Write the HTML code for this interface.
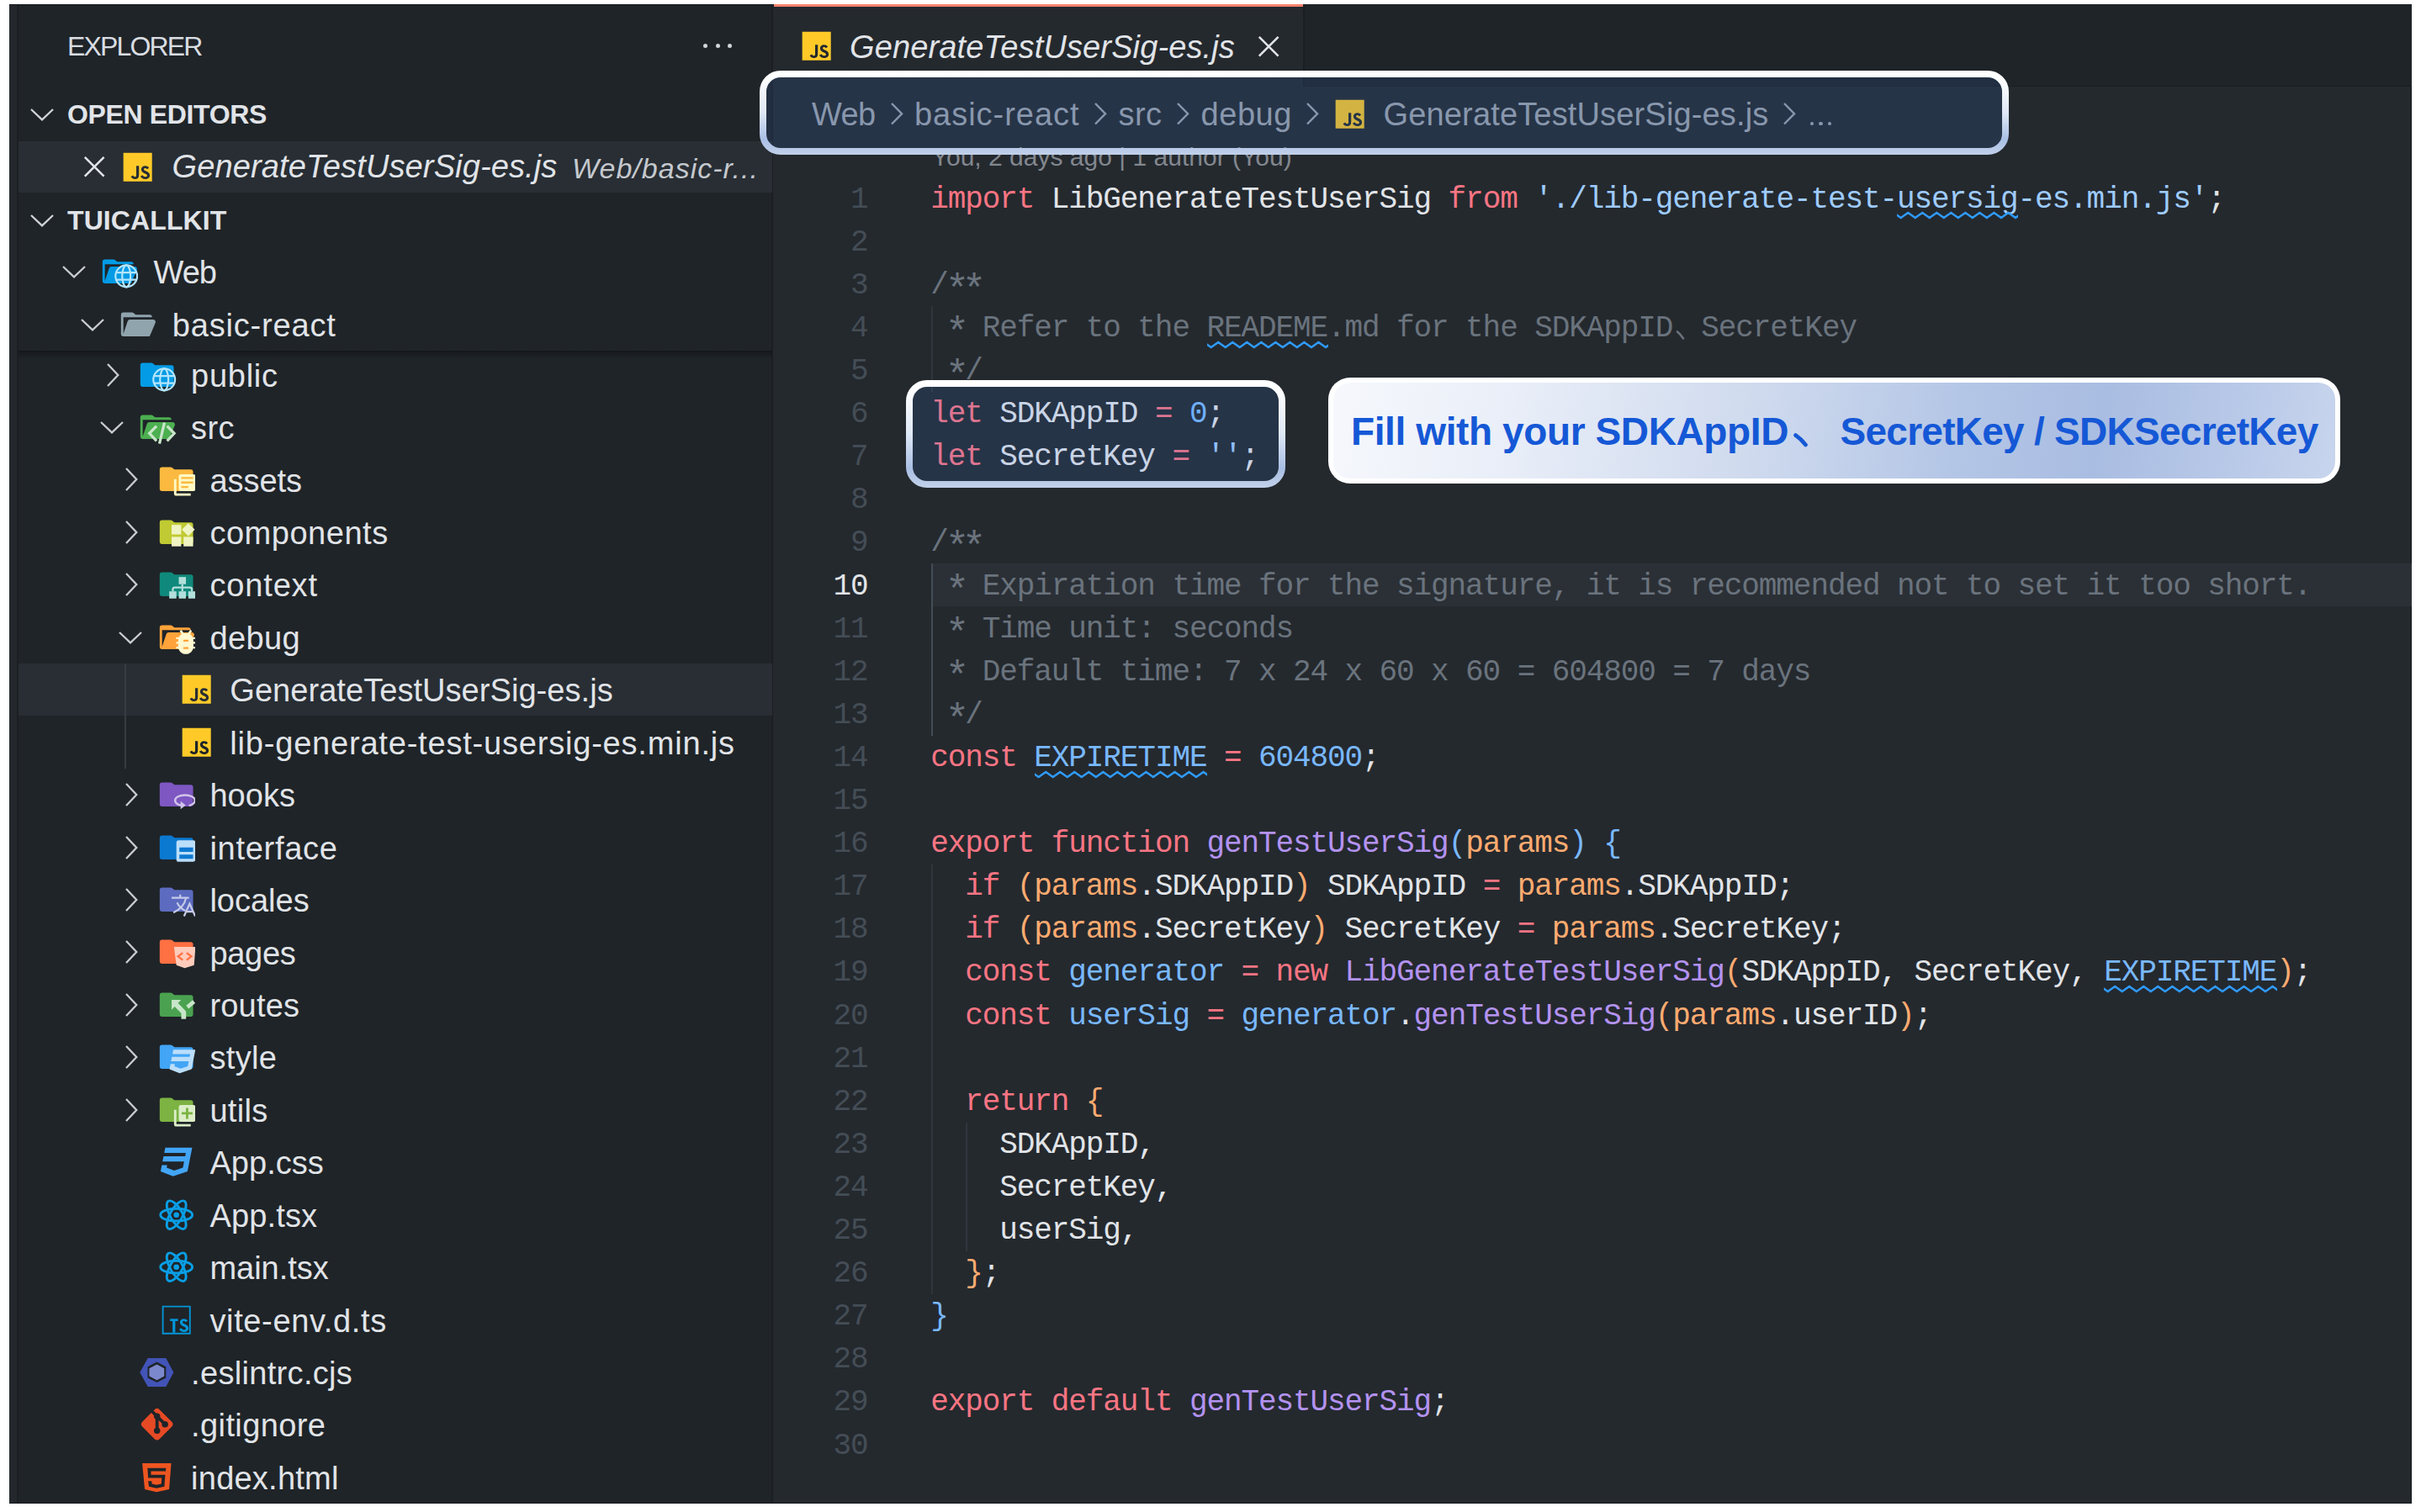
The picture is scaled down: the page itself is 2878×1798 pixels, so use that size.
<!DOCTYPE html>
<html><head><meta charset="utf-8"><title>GenerateTestUserSig-es.js</title>
<style>
html,body{margin:0;padding:0;background:#fff;}
body{width:2878px;height:1798px;position:relative;overflow:hidden;font-family:'Liberation Sans', sans-serif;}
.k{color:#f97583}.s{color:#9ecbff}.f{color:#b392f0}.c{color:#79b8ff}.p{color:#ffab70}.m{color:#6a737d}
.b1{color:#79b8ff}.b2{color:#ffab70}
.ln{position:absolute;left:940px;width:91.6px;text-align:right;letter-spacing:-1.09px;height:51.1px;line-height:51.1px;font-family:'Liberation Mono', monospace;font-size:36px;white-space:pre}
.cl{position:absolute;left:1106.2px;height:51.1px;line-height:51.1px;font-family:'Liberation Mono', monospace;font-size:36px;color:#e1e4e8;white-space:pre;letter-spacing:-1.09px}
.a{display:inline-block;transform:translateY(6.5px) scale(1.32)}
</style></head><body>
<div style="position:absolute;left:11px;top:5px;width:2856px;height:1783px;background:#24292e;"></div>
<div style="position:absolute;left:11px;top:5px;width:11px;height:1783px;background:#24282d;"></div>
<div style="position:absolute;left:20px;top:5px;width:2px;height:1783px;background:#1b1f23;"></div>
<div style="position:absolute;left:22px;top:5px;width:896px;height:1783px;background:#1f2428;"></div>
<div style="position:absolute;left:917.2px;top:5px;width:1.6px;height:1783px;background:#1b1f23;"></div>
<div style="position:absolute;left:11px;top:5px;width:2856px;height:1px;background:#15181c;"></div>
<div style="position:absolute;left:11px;top:1786.5px;width:2856px;height:1.5px;background:#15181c;"></div>
<div style="position:absolute;left:2865.5px;top:5px;width:1.5px;height:1783px;background:#15181c;"></div>
<div style="position:absolute;left:919.5px;top:5px;width:1947.5px;height:98px;background:#1f2428;"></div>
<div style="position:absolute;left:919.5px;top:5px;width:630px;height:98px;background:#24292e;"></div>
<div style="position:absolute;left:919.5px;top:5px;width:630px;height:3.2px;background:#f9826c;"></div>
<div style="position:absolute;left:1549px;top:5px;width:1.5px;height:98px;background:#1b1f23;"></div>
<div style="position:absolute;left:1550.5px;top:102px;width:1316.5px;height:1px;background:#1b1f23;"></div>
<svg style="position:absolute;left:947.50px;top:31.90px;" width="45.4" height="45.4" viewBox="0 0 24 24"><path d="M3 3h18v18H3V3m4.730 15.040c.4.850 1.190 1.550 2.540 1.550 1.500 0 2.530-.8 2.530-2.550v-5.780h-1.700V17c0 .860-.35 1.080-.9 1.080-.58 0-.82-.4-1.090-.870l-1.380.830m5.980-.18c.5.980 1.510 1.730 3.090 1.730 1.600 0 2.800-.830 2.800-2.360 0-1.410-.81-2.040-2.250-2.660l-.42-.18c-.73-.31-1.040-.52-1.040-1.020 0-.41.310-.73.810-.73.480 0 .8.210 1.090.73l1.310-.870c-.55-.96-1.330-1.330-2.400-1.330-1.510 0-2.480.960-2.480 2.230 0 1.380.810 2.030 2.030 2.550l.42.180c.78.340 1.240.55 1.240 1.130 0 .48-.45.830-1.150.830-.830 0-1.310-.43-1.670-1.030l-1.380.8z" fill="#ffca28"/></svg>
<div style="position:absolute;left:1010px;top:25px;height:62px;line-height:62px;font-family:'Liberation Sans', sans-serif;font-size:38px;color:#e1e4e8;white-space:pre;font-style:italic;letter-spacing:0.128px;">GenerateTestUserSig-es.js</div>
<svg style="position:absolute;left:1494.30px;top:40.50px" width="28.4" height="28.4" viewBox="0 0 28.4 28.4"><path d="M2.800 2.800L25.599999999999998 25.599999999999998M25.599999999999998 2.800L2.800 25.599999999999998" fill="none" stroke="#e1e4e8" stroke-width="2.6"/></svg>
<div style="position:absolute;left:80px;top:24px;height:62px;line-height:62px;font-family:'Liberation Sans', sans-serif;font-size:32px;color:#d9dde2;white-space:pre;letter-spacing:-1.848px;">EXPLORER</div>
<div style="position:absolute;left:836.0px;top:52px;width:5px;height:5px;border-radius:50%;background:#d1d5da"></div>
<div style="position:absolute;left:850.6px;top:52px;width:5px;height:5px;border-radius:50%;background:#d1d5da"></div>
<div style="position:absolute;left:865.2px;top:52px;width:5px;height:5px;border-radius:50%;background:#d1d5da"></div>
<svg style="position:absolute;left:34.00px;top:127.35px" width="32" height="18.3" viewBox="0 0 32 18.3"><path d="M3 3L16.0 15.3L29 3" fill="none" stroke="#d1d5da" stroke-width="2.3"/></svg>
<div style="position:absolute;left:80px;top:105px;height:62px;line-height:62px;font-family:'Liberation Sans', sans-serif;font-size:32px;color:#e1e4e8;white-space:pre;font-weight:bold;letter-spacing:-0.353px;">OPEN EDITORS</div>
<div style="position:absolute;left:22px;top:167.6px;width:896px;height:61.6px;background:#282e34;"></div>
<svg style="position:absolute;left:98.30px;top:184.30px" width="28.4" height="28.4" viewBox="0 0 28.4 28.4"><path d="M2.800 2.800L25.599999999999998 25.599999999999998M25.599999999999998 2.800L2.800 25.599999999999998" fill="none" stroke="#e1e4e8" stroke-width="2.6"/></svg>
<svg style="position:absolute;left:141.30px;top:175.80px;" width="45.4" height="45.4" viewBox="0 0 24 24"><path d="M3 3h18v18H3V3m4.730 15.040c.4.850 1.190 1.550 2.540 1.550 1.500 0 2.530-.8 2.530-2.550v-5.780h-1.700V17c0 .860-.35 1.080-.9 1.080-.58 0-.82-.4-1.090-.870l-1.380.830m5.980-.18c.5.980 1.510 1.730 3.090 1.730 1.600 0 2.800-.830 2.800-2.360 0-1.410-.81-2.040-2.250-2.660l-.42-.18c-.73-.31-1.040-.52-1.040-1.020 0-.41.310-.73.810-.73.480 0 .8.210 1.090.73l1.310-.870c-.55-.96-1.330-1.330-2.400-1.330-1.510 0-2.480.960-2.480 2.230 0 1.380.810 2.030 2.030 2.550l.42.180c.78.340 1.240.55 1.240 1.130 0 .48-.45.830-1.150.830-.830 0-1.310-.43-1.670-1.030l-1.380.8z" fill="#ffca28"/></svg>
<div style="position:absolute;left:204.5px;top:167px;height:62px;line-height:62px;font-family:'Liberation Sans', sans-serif;font-size:38px;color:#e1e4e8;white-space:pre;font-style:italic;letter-spacing:0.128px;">GenerateTestUserSig-es.js</div>
<div style="position:absolute;left:680px;top:169px;height:62px;line-height:62px;font-family:'Liberation Sans', sans-serif;font-size:34px;color:#c5c9ce;white-space:pre;font-style:italic;letter-spacing:1.011px;">Web/basic-r...</div>
<svg style="position:absolute;left:34.00px;top:253.35px" width="32" height="18.3" viewBox="0 0 32 18.3"><path d="M3 3L16.0 15.3L29 3" fill="none" stroke="#d1d5da" stroke-width="2.3"/></svg>
<div style="position:absolute;left:80px;top:231px;height:62px;line-height:62px;font-family:'Liberation Sans', sans-serif;font-size:32px;color:#e1e4e8;white-space:pre;font-weight:bold;letter-spacing:0.109px;">TUICALLKIT</div>
<div style="position:absolute;left:22px;top:788.7px;width:896px;height:62.04px;background:#282e34;"></div>
<div style="position:absolute;left:148.2px;top:788.7px;width:1.7px;height:124.88px;background:#363c43;"></div>
<svg style="position:absolute;left:119.00px;top:300.22px;" width="45.4" height="45.4" viewBox="0 0 24 24"><g transform="scale(.75)"><path d="M28.967 12H9.442a2 2 0 0 0-1.898 1.368L4 24V10h24a2 2 0 0 0-2-2H15.124a2 2 0 0 1-1.28-.464l-1.288-1.072A2 2 0 0 0 11.276 6H4a2 2 0 0 0-2 2v16a2 2 0 0 0 2 2h22l4.805-11.212A2 2 0 0 0 28.967 12z" fill="#039be5"/><g fill="none" stroke="#b3e5fc" stroke-width="1.55"><circle cx="22" cy="20" r="9.1"/><ellipse cx="22" cy="20" rx="3.500" ry="9.1"/><path d="M13.600 17h16.800M13.600 23h16.800"/></g></g></svg>
<svg style="position:absolute;left:71.50px;top:314.07px" width="32" height="18.3" viewBox="0 0 32 18.3"><path d="M3 3L16.0 15.3L29 3" fill="none" stroke="#c9cdd2" stroke-width="2.3"/></svg>
<div style="position:absolute;left:182.5px;top:293.31999999999994px;height:62px;line-height:62px;font-family:'Liberation Sans', sans-serif;font-size:38px;color:#e1e4e8;white-space:pre;letter-spacing:-0.984px;">Web</div>
<svg style="position:absolute;left:141.30px;top:362.66px;" width="45.4" height="45.4" viewBox="0 0 24 24"><g transform="scale(.75)"><path d="M28.967 12H9.442a2 2 0 0 0-1.898 1.368L4 24V10h24a2 2 0 0 0-2-2H15.124a2 2 0 0 1-1.28-.464l-1.288-1.072A2 2 0 0 0 11.276 6H4a2 2 0 0 0-2 2v16a2 2 0 0 0 2 2h22l4.805-11.212A2 2 0 0 0 28.967 12z" fill="#90a4ae"/></g></svg>
<svg style="position:absolute;left:93.80px;top:376.51px" width="32" height="18.3" viewBox="0 0 32 18.3"><path d="M3 3L16.0 15.3L29 3" fill="none" stroke="#c9cdd2" stroke-width="2.3"/></svg>
<div style="position:absolute;left:204.8px;top:355.76px;height:62px;line-height:62px;font-family:'Liberation Sans', sans-serif;font-size:38px;color:#e1e4e8;white-space:pre;letter-spacing:0.823px;">basic-react</div>
<svg style="position:absolute;left:164.40px;top:422.58px;" width="45.4" height="45.4" viewBox="0 0 24 24"><g transform="scale(.75)"><path d="M13.844 7.536l-1.288-1.072A2 2 0 0 0 11.276 6H4a2 2 0 0 0-2 2v16a2 2 0 0 0 2 2h24a2 2 0 0 0 2-2V10a2 2 0 0 0-2-2H15.124a2 2 0 0 1-1.28-.464z" fill="#039be5"/><g fill="none" stroke="#b3e5fc" stroke-width="1.55"><circle cx="22" cy="20" r="9.1"/><ellipse cx="22" cy="20" rx="3.500" ry="9.1"/><path d="M13.600 17h16.800M13.600 23h16.800"/></g></g></svg>
<svg style="position:absolute;left:124.95px;top:429.58px" width="18.3" height="32" viewBox="0 0 18.3 32"><path d="M3 3L15.3 16.0L3 29" fill="none" stroke="#c9cdd2" stroke-width="2.3"/></svg>
<div style="position:absolute;left:227.1px;top:415.68000000000006px;height:62px;line-height:62px;font-family:'Liberation Sans', sans-serif;font-size:38px;color:#e1e4e8;white-space:pre;letter-spacing:0.734px;">public</div>
<svg style="position:absolute;left:164.40px;top:485.02px;" width="45.4" height="45.4" viewBox="0 0 24 24"><g transform="scale(.75)"><path d="M28.967 12H9.442a2 2 0 0 0-1.898 1.368L4 24V10h24a2 2 0 0 0-2-2H15.124a2 2 0 0 1-1.28-.464l-1.288-1.072A2 2 0 0 0 11.276 6H4a2 2 0 0 0-2 2v16a2 2 0 0 0 2 2h22l4.805-11.212A2 2 0 0 0 28.967 12z" fill="#4caf50"/><g fill="none" stroke="#c8e6c9" stroke-width="2.3" stroke-linejoin="miter"><path d="M15.6 15.2L9.6 21.4l6 6.4M24.4 15.2l6 6.2-6 6.4M22.2 12.4L18 30"/></g></g></svg>
<svg style="position:absolute;left:116.90px;top:498.87px" width="32" height="18.3" viewBox="0 0 32 18.3"><path d="M3 3L16.0 15.3L29 3" fill="none" stroke="#c9cdd2" stroke-width="2.3"/></svg>
<div style="position:absolute;left:227.1px;top:478.12px;height:62px;line-height:62px;font-family:'Liberation Sans', sans-serif;font-size:38px;color:#e1e4e8;white-space:pre;letter-spacing:0.315px;">src</div>
<svg style="position:absolute;left:186.70px;top:547.46px;" width="45.4" height="45.4" viewBox="0 0 24 24"><g transform="scale(.75)"><path d="M13.844 7.536l-1.288-1.072A2 2 0 0 0 11.276 6H4a2 2 0 0 0-2 2v16a2 2 0 0 0 2 2h24a2 2 0 0 0 2-2V10a2 2 0 0 0-2-2H15.124a2 2 0 0 1-1.28-.464z" fill="#fbb940"/><path d="M14 16h2v12h12v2H16a2 2 0 0 1-2-2z" fill="#fff9c4"/><rect x="18" y="12" width="14" height="14" rx="1.8" fill="#fff9c4"/><path d="M20 14.2h10v1.7H20zM20 18h10v1.7H20zM20 21.8h6v1.7h-6z" fill="#fbb940"/></g></svg>
<svg style="position:absolute;left:147.25px;top:554.46px" width="18.3" height="32" viewBox="0 0 18.3 32"><path d="M3 3L15.3 16.0L3 29" fill="none" stroke="#c9cdd2" stroke-width="2.3"/></svg>
<div style="position:absolute;left:249.4px;top:540.5600000000001px;height:62px;line-height:62px;font-family:'Liberation Sans', sans-serif;font-size:38px;color:#e1e4e8;white-space:pre;letter-spacing:-0.038px;">assets</div>
<svg style="position:absolute;left:186.70px;top:609.90px;" width="45.4" height="45.4" viewBox="0 0 24 24"><g transform="scale(.75)"><path d="M13.844 7.536l-1.288-1.072A2 2 0 0 0 11.276 6H4a2 2 0 0 0-2 2v16a2 2 0 0 0 2 2h24a2 2 0 0 0 2-2V10a2 2 0 0 0-2-2H15.124a2 2 0 0 1-1.28-.464z" fill="#c0ca33"/><g fill="#f0f4c3"><rect x="12" y="10" width="8" height="8"/><rect x="12" y="20" width="8" height="8"/><rect x="22" y="20" width="8" height="8"/><path d="M26 8.6l5.4 5.4-5.4 5.4-5.4-5.4z"/></g></g></svg>
<svg style="position:absolute;left:147.25px;top:616.90px" width="18.3" height="32" viewBox="0 0 18.3 32"><path d="M3 3L15.3 16.0L3 29" fill="none" stroke="#c9cdd2" stroke-width="2.3"/></svg>
<div style="position:absolute;left:249.4px;top:603.0000000000001px;height:62px;line-height:62px;font-family:'Liberation Sans', sans-serif;font-size:38px;color:#e1e4e8;white-space:pre;letter-spacing:0.528px;">components</div>
<svg style="position:absolute;left:186.70px;top:672.34px;" width="45.4" height="45.4" viewBox="0 0 24 24"><g transform="scale(.75)"><path d="M13.844 7.536l-1.288-1.072A2 2 0 0 0 11.276 6H4a2 2 0 0 0-2 2v16a2 2 0 0 0 2 2h24a2 2 0 0 0 2-2V10a2 2 0 0 0-2-2H15.124a2 2 0 0 1-1.28-.464z" fill="#0f897b"/><g fill="#b2dfdb"><rect x="18" y="10" width="6" height="6"/><rect x="10" y="22" width="6" height="6"/><rect x="18" y="22" width="6" height="6"/><rect x="26" y="22" width="6" height="6"/></g><path d="M21 16v6M13 22v-1.6a1.6 1.6 0 0 1 1.6-1.6h12.8a1.6 1.6 0 0 1 1.6 1.6V22" fill="none" stroke="#b2dfdb" stroke-width="1.6"/></g></svg>
<svg style="position:absolute;left:147.25px;top:679.34px" width="18.3" height="32" viewBox="0 0 18.3 32"><path d="M3 3L15.3 16.0L3 29" fill="none" stroke="#c9cdd2" stroke-width="2.3"/></svg>
<div style="position:absolute;left:249.4px;top:665.44px;height:62px;line-height:62px;font-family:'Liberation Sans', sans-serif;font-size:38px;color:#e1e4e8;white-space:pre;letter-spacing:0.853px;">context</div>
<svg style="position:absolute;left:186.70px;top:734.78px;" width="45.4" height="45.4" viewBox="0 0 24 24"><g transform="scale(.75)"><path d="M28.967 12H9.442a2 2 0 0 0-1.898 1.368L4 24V10h24a2 2 0 0 0-2-2H15.124a2 2 0 0 1-1.28-.464l-1.288-1.072A2 2 0 0 0 11.276 6H4a2 2 0 0 0-2 2v16a2 2 0 0 0 2 2h22l4.805-11.212A2 2 0 0 0 28.967 12z" fill="#ffa33a"/><g fill="#fff8d0"><path d="M23.900 12.600c3.600 0 6.400 2.700 6.400 6.500v4.500c0 3.800-2.800 6.600-6.400 6.600s-6.400-2.800-6.400-6.600V19.100c0-3.800 2.800-6.500 6.400-6.500z"/><path d="M18.700 10.800l1.600-1 2.200 3.400-1.600 1zM29.100 10.800l-1.600-1-2.200 3.400 1.600 1z"/><path d="M15.800 16h3v1.600h-3zM15.800 19.900h3v1.600h-3zM15.800 24h3v1.600h-3zM29 16h3v1.600h-3zM29 19.900h3v1.600h-3zM29 24h3v1.600h-3z"/></g><path d="M21.800 18.200h4.300v1.600h-4.300zM21.800 24.300h4.300v1.600h-4.300z" fill="#ffa33a"/></g></svg>
<svg style="position:absolute;left:139.20px;top:748.63px" width="32" height="18.3" viewBox="0 0 32 18.3"><path d="M3 3L16.0 15.3L29 3" fill="none" stroke="#c9cdd2" stroke-width="2.3"/></svg>
<div style="position:absolute;left:249.4px;top:727.88px;height:62px;line-height:62px;font-family:'Liberation Sans', sans-serif;font-size:38px;color:#e1e4e8;white-space:pre;letter-spacing:0.386px;">debug</div>
<svg style="position:absolute;left:210.60px;top:797.22px;" width="45.4" height="45.4" viewBox="0 0 24 24"><path d="M3 3h18v18H3V3m4.730 15.040c.4.850 1.190 1.550 2.540 1.550 1.500 0 2.530-.8 2.530-2.550v-5.780h-1.700V17c0 .860-.35 1.080-.9 1.080-.58 0-.82-.4-1.090-.870l-1.380.830m5.980-.18c.5.980 1.510 1.730 3.090 1.730 1.600 0 2.800-.830 2.800-2.360 0-1.410-.81-2.040-2.250-2.660l-.42-.18c-.73-.31-1.040-.52-1.040-1.020 0-.41.310-.73.810-.73.480 0 .8.210 1.090.73l1.310-.870c-.55-.96-1.330-1.330-2.400-1.330-1.510 0-2.480.960-2.480 2.230 0 1.380.810 2.030 2.030 2.550l.42.180c.78.340 1.240.55 1.240 1.130 0 .48-.45.830-1.150.830-.830 0-1.310-.43-1.670-1.030l-1.380.8z" fill="#ffca28"/></svg>
<div style="position:absolute;left:273.3px;top:790.32px;height:62px;line-height:62px;font-family:'Liberation Sans', sans-serif;font-size:38px;color:#e1e4e8;white-space:pre;letter-spacing:0.053px;">GenerateTestUserSig-es.js</div>
<svg style="position:absolute;left:210.60px;top:859.66px;" width="45.4" height="45.4" viewBox="0 0 24 24"><path d="M3 3h18v18H3V3m4.730 15.040c.4.850 1.190 1.550 2.540 1.550 1.500 0 2.530-.8 2.530-2.550v-5.780h-1.700V17c0 .860-.35 1.080-.9 1.080-.58 0-.82-.4-1.090-.870l-1.380.830m5.980-.18c.5.980 1.510 1.730 3.090 1.730 1.600 0 2.800-.830 2.800-2.360 0-1.410-.81-2.040-2.250-2.660l-.42-.18c-.73-.31-1.040-.52-1.040-1.020 0-.41.310-.73.810-.73.480 0 .8.210 1.090.73l1.310-.870c-.55-.96-1.330-1.330-2.400-1.330-1.510 0-2.480.960-2.480 2.230 0 1.380.810 2.030 2.030 2.550l.42.180c.78.340 1.240.55 1.240 1.130 0 .48-.45.830-1.150.830-.830 0-1.310-.43-1.670-1.030l-1.380.8z" fill="#ffca28"/></svg>
<div style="position:absolute;left:273.3px;top:852.7600000000001px;height:62px;line-height:62px;font-family:'Liberation Sans', sans-serif;font-size:38px;color:#e1e4e8;white-space:pre;letter-spacing:0.805px;">lib-generate-test-usersig-es.min.js</div>
<svg style="position:absolute;left:186.70px;top:922.10px;" width="45.4" height="45.4" viewBox="0 0 24 24"><g transform="scale(.75)"><path d="M13.844 7.536l-1.288-1.072A2 2 0 0 0 11.276 6H4a2 2 0 0 0-2 2v16a2 2 0 0 0 2 2h24a2 2 0 0 0 2-2V10a2 2 0 0 0-2-2H15.124a2 2 0 0 1-1.28-.464z" fill="#7e57c2"/><path d="M26.500 25.300c3.100-.6 5-2.200 5-4.300 0-2.700-3.700-4.400-8.300-4.400s-8.300 1.700-8.300 4.400c0 2 2 3.500 4.900 4.200" fill="none" stroke="#d1c4e9" stroke-width="1.7"/><path d="M19.500 21.600l4.300 3.400-4.300 3.400z" fill="#d1c4e9"/></g></svg>
<svg style="position:absolute;left:147.25px;top:929.10px" width="18.3" height="32" viewBox="0 0 18.3 32"><path d="M3 3L15.3 16.0L3 29" fill="none" stroke="#c9cdd2" stroke-width="2.3"/></svg>
<div style="position:absolute;left:249.4px;top:915.2px;height:62px;line-height:62px;font-family:'Liberation Sans', sans-serif;font-size:38px;color:#e1e4e8;white-space:pre;letter-spacing:0.059px;">hooks</div>
<svg style="position:absolute;left:186.70px;top:984.54px;" width="45.4" height="45.4" viewBox="0 0 24 24"><g transform="scale(.75)"><path d="M13.844 7.536l-1.288-1.072A2 2 0 0 0 11.276 6H4a2 2 0 0 0-2 2v16a2 2 0 0 0 2 2h24a2 2 0 0 0 2-2V10a2 2 0 0 0-2-2H15.124a2 2 0 0 1-1.28-.464z" fill="#0c79d0"/><rect x="16" y="10" width="16" height="18" rx="2" fill="#bbdefb"/><path d="M18.500 16h11.500v3.700H18.500zM18.500 22h11.500v3.600H18.500z" fill="#0c79d0"/></g></svg>
<svg style="position:absolute;left:147.25px;top:991.54px" width="18.3" height="32" viewBox="0 0 18.3 32"><path d="M3 3L15.3 16.0L3 29" fill="none" stroke="#c9cdd2" stroke-width="2.3"/></svg>
<div style="position:absolute;left:249.4px;top:977.64px;height:62px;line-height:62px;font-family:'Liberation Sans', sans-serif;font-size:38px;color:#e1e4e8;white-space:pre;letter-spacing:0.728px;">interface</div>
<svg style="position:absolute;left:186.70px;top:1046.98px;" width="45.4" height="45.4" viewBox="0 0 24 24"><g transform="scale(.75)"><path d="M13.844 7.536l-1.288-1.072A2 2 0 0 0 11.276 6H4a2 2 0 0 0-2 2v16a2 2 0 0 0 2 2h24a2 2 0 0 0 2-2V10a2 2 0 0 0-2-2H15.124a2 2 0 0 1-1.28-.464z" fill="#5c6bc0"/><g fill="none" stroke="#c5cae9" stroke-width="1.5"><path d="M12 14.500h14.500M19.200 11.800v2.700M24 14.800c-1 5-5 9.500-10.500 12.200M16.500 18.500c1.500 3 4 5.500 7 7"/><path d="M22.400 30l4.700-10.500L31.800 30M24.200 26.200h5.800" stroke-width="1.6"/></g></g></svg>
<svg style="position:absolute;left:147.25px;top:1053.98px" width="18.3" height="32" viewBox="0 0 18.3 32"><path d="M3 3L15.3 16.0L3 29" fill="none" stroke="#c9cdd2" stroke-width="2.3"/></svg>
<div style="position:absolute;left:249.4px;top:1040.0800000000002px;height:62px;line-height:62px;font-family:'Liberation Sans', sans-serif;font-size:38px;color:#e1e4e8;white-space:pre;letter-spacing:0.000px;">locales</div>
<svg style="position:absolute;left:186.70px;top:1109.42px;" width="45.4" height="45.4" viewBox="0 0 24 24"><g transform="scale(.75)"><path d="M13.844 7.536l-1.288-1.072A2 2 0 0 0 11.276 6H4a2 2 0 0 0-2 2v16a2 2 0 0 0 2 2h24a2 2 0 0 0 2-2V10a2 2 0 0 0-2-2H15.124a2 2 0 0 1-1.28-.464z" fill="#ff7043"/><path d="M14 12h18l-1.200 15.400L23 29.700l-7-2.300z" fill="#ffccbc"/><path d="M21.300 17L17.400 20l3.900 3M24.600 17l3.900 3-3.900 3" fill="none" stroke="#ff7043" stroke-width="1.650"/></g></svg>
<svg style="position:absolute;left:147.25px;top:1116.42px" width="18.3" height="32" viewBox="0 0 18.3 32"><path d="M3 3L15.3 16.0L3 29" fill="none" stroke="#c9cdd2" stroke-width="2.3"/></svg>
<div style="position:absolute;left:249.4px;top:1102.5200000000002px;height:62px;line-height:62px;font-family:'Liberation Sans', sans-serif;font-size:38px;color:#e1e4e8;white-space:pre;letter-spacing:-0.269px;">pages</div>
<svg style="position:absolute;left:186.70px;top:1171.86px;" width="45.4" height="45.4" viewBox="0 0 24 24"><g transform="scale(.75)"><path d="M13.844 7.536l-1.288-1.072A2 2 0 0 0 11.276 6H4a2 2 0 0 0-2 2v16a2 2 0 0 0 2 2h24a2 2 0 0 0 2-2V10a2 2 0 0 0-2-2H15.124a2 2 0 0 1-1.28-.464z" fill="#4aa250"/><g fill="#c8e6c9"><path d="M12 12h8l-2.700 2.700 6.200 6.200c.4.400.6.900.6 1.500V28h-4v-4.800l-5.500-5.500L12 20.300z"/><path d="M24.200 16.800l5.500-4.700 2.100 2.700-5.600 4.600z"/></g></g></svg>
<svg style="position:absolute;left:147.25px;top:1178.86px" width="18.3" height="32" viewBox="0 0 18.3 32"><path d="M3 3L15.3 16.0L3 29" fill="none" stroke="#c9cdd2" stroke-width="2.3"/></svg>
<div style="position:absolute;left:249.4px;top:1164.9600000000003px;height:62px;line-height:62px;font-family:'Liberation Sans', sans-serif;font-size:38px;color:#e1e4e8;white-space:pre;letter-spacing:0.196px;">routes</div>
<svg style="position:absolute;left:186.70px;top:1234.30px;" width="45.4" height="45.4" viewBox="0 0 24 24"><g transform="scale(.75)"><path d="M13.844 7.536l-1.288-1.072A2 2 0 0 0 11.276 6H4a2 2 0 0 0-2 2v16a2 2 0 0 0 2 2h24a2 2 0 0 0 2-2V10a2 2 0 0 0-2-2H15.124a2 2 0 0 1-1.28-.464z" fill="#42a5f5"/><path d="M5 3l-.65 3.340h13.590L17.500 8.500H3.920l-.66 3.330h13.590l-.76 3.810-5.480 1.810-4.750-1.810.33-1.640H2.850l-.79 4 7.850 3 9.050-3 1.200-6.030.24-1.210L21.940 3H5z" fill="#bbdefb" transform="translate(7.95 6.830) scale(1.092)"/></g></svg>
<svg style="position:absolute;left:147.25px;top:1241.30px" width="18.3" height="32" viewBox="0 0 18.3 32"><path d="M3 3L15.3 16.0L3 29" fill="none" stroke="#c9cdd2" stroke-width="2.3"/></svg>
<div style="position:absolute;left:249.4px;top:1227.4px;height:62px;line-height:62px;font-family:'Liberation Sans', sans-serif;font-size:38px;color:#e1e4e8;white-space:pre;letter-spacing:0.352px;">style</div>
<svg style="position:absolute;left:186.70px;top:1296.74px;" width="45.4" height="45.4" viewBox="0 0 24 24"><g transform="scale(.75)"><path d="M13.844 7.536l-1.288-1.072A2 2 0 0 0 11.276 6H4a2 2 0 0 0-2 2v16a2 2 0 0 0 2 2h24a2 2 0 0 0 2-2V10a2 2 0 0 0-2-2H15.124a2 2 0 0 1-1.28-.464z" fill="#7cb342"/><path d="M14 16h2v12h12v2H16a2 2 0 0 1-2-2z" fill="#dcedc8"/><rect x="18" y="12" width="14" height="14" rx="1.8" fill="#dcedc8"/><path d="M24 14.4h2v3.6h3.6v2H26v3.6h-2V20h-3.6v-2H24z" fill="#7cb342"/></g></svg>
<svg style="position:absolute;left:147.25px;top:1303.74px" width="18.3" height="32" viewBox="0 0 18.3 32"><path d="M3 3L15.3 16.0L3 29" fill="none" stroke="#c9cdd2" stroke-width="2.3"/></svg>
<div style="position:absolute;left:249.4px;top:1289.8400000000001px;height:62px;line-height:62px;font-family:'Liberation Sans', sans-serif;font-size:38px;color:#e1e4e8;white-space:pre;letter-spacing:0.304px;">utils</div>
<svg style="position:absolute;left:186.70px;top:1359.18px;" width="45.4" height="45.4" viewBox="0 0 24 24"><path d="M5 3l-.65 3.340h13.590L17.500 8.500H3.920l-.66 3.330h13.590l-.76 3.810-5.480 1.810-4.750-1.810.33-1.640H2.850l-.79 4 7.850 3 9.050-3 1.200-6.030.24-1.210L21.940 3H5z" fill="#42a5f5"/></svg>
<div style="position:absolute;left:249.4px;top:1352.2800000000002px;height:62px;line-height:62px;font-family:'Liberation Sans', sans-serif;font-size:38px;color:#e1e4e8;white-space:pre;letter-spacing:0.047px;">App.css</div>
<svg style="position:absolute;left:186.70px;top:1421.62px;" width="45.4" height="45.4" viewBox="0 0 24 24"><g fill="none" stroke="#0a9ee4" stroke-width="1.550"><ellipse cx="12" cy="12" rx="10" ry="3.900"/><ellipse cx="12" cy="12" rx="10" ry="3.900" transform="rotate(60 12 12)"/><ellipse cx="12" cy="12" rx="10" ry="3.900" transform="rotate(120 12 12)"/></g><circle cx="12" cy="12" r="1.750" fill="#0a9ee4"/></svg>
<div style="position:absolute;left:249.4px;top:1414.72px;height:62px;line-height:62px;font-family:'Liberation Sans', sans-serif;font-size:38px;color:#e1e4e8;white-space:pre;letter-spacing:0.167px;">App.tsx</div>
<svg style="position:absolute;left:186.70px;top:1484.06px;" width="45.4" height="45.4" viewBox="0 0 24 24"><g fill="none" stroke="#0a9ee4" stroke-width="1.550"><ellipse cx="12" cy="12" rx="10" ry="3.900"/><ellipse cx="12" cy="12" rx="10" ry="3.900" transform="rotate(60 12 12)"/><ellipse cx="12" cy="12" rx="10" ry="3.900" transform="rotate(120 12 12)"/></g><circle cx="12" cy="12" r="1.750" fill="#0a9ee4"/></svg>
<div style="position:absolute;left:249.4px;top:1477.16px;height:62px;line-height:62px;font-family:'Liberation Sans', sans-serif;font-size:38px;color:#e1e4e8;white-space:pre;letter-spacing:-0.011px;">main.tsx</div>
<svg style="position:absolute;left:186.70px;top:1546.50px;" width="45.4" height="45.4" viewBox="0 0 24 24"><path d="M3.500 3.500h17v17h-17z" fill="none" stroke="#0294d8" stroke-width="1"/><path d="M13 11.250H8v1.500h1.600V20h1.700v-7.250H13z" fill="#0294d8"/><path d="M13.710 17.860c.5.980 1.510 1.730 3.090 1.730 1.600 0 2.800-.830 2.800-2.360 0-1.410-.81-2.040-2.250-2.660l-.42-.18c-.73-.31-1.040-.52-1.040-1.020 0-.41.310-.73.810-.73.480 0 .8.210 1.090.73l1.310-.870c-.55-.96-1.330-1.330-2.400-1.330-1.510 0-2.480.960-2.480 2.230 0 1.380.810 2.030 2.030 2.550l.42.180c.78.340 1.240.55 1.240 1.130 0 .48-.45.830-1.150.830-.830 0-1.310-.43-1.670-1.030l-1.380.8z" fill="#0294d8"/></svg>
<div style="position:absolute;left:249.4px;top:1539.6000000000001px;height:62px;line-height:62px;font-family:'Liberation Sans', sans-serif;font-size:38px;color:#e1e4e8;white-space:pre;letter-spacing:0.650px;">vite-env.d.ts</div>
<svg style="position:absolute;left:164.40px;top:1608.94px;" width="45.4" height="45.4" viewBox="0 0 24 24"><path d="M1.200 12.100L6.200 3.200h11.400l4.800 8.900-4.800 9H6.200z" fill="#4254b7"/><path d="M11.900 5.550l5.700 3.050v7L11.900 18.450 6.100 15.600v-7z" fill="#1f2428"/><path d="M11.900 7.100l4.600 2.500v5l-4.600 2.500-4.800-2.500v-5z" fill="#7c88cc"/></svg>
<div style="position:absolute;left:227.1px;top:1602.0400000000002px;height:62px;line-height:62px;font-family:'Liberation Sans', sans-serif;font-size:38px;color:#e1e4e8;white-space:pre;letter-spacing:0.321px;">.eslintrc.cjs</div>
<svg style="position:absolute;left:164.40px;top:1671.38px;" width="45.4" height="45.4" viewBox="0 0 24 24"><path d="M2.600 10.590L8.380 4.800l1.690 1.700c-.24.850.15 1.780.93 2.230v5.540c-.6.340-1 .990-1 1.730a2 2 0 0 0 2 2 2 2 0 0 0 2-2c0-.74-.4-1.390-1-1.730V9.410l2.070 2.090c-.07.150-.07.320-.07.500a2 2 0 0 0 2 2 2 2 0 0 0 2-2 2 2 0 0 0-2-2c-.18 0-.35 0-.5.070L13.930 7.500a1.980 1.980 0 0 0-1.150-2.340c-.43-.16-.88-.2-1.280-.09L9.800 3.380l.79-.78c.78-.79 2.040-.79 2.820 0l7.990 7.990c.79.780.79 2.040 0 2.820l-7.990 7.990c-.78.790-2.040.79-2.820 0L2.600 13.410c-.79-.78-.79-2.040 0-2.820z" fill="#e64a25"/></svg>
<div style="position:absolute;left:227.1px;top:1664.4800000000002px;height:62px;line-height:62px;font-family:'Liberation Sans', sans-serif;font-size:38px;color:#e1e4e8;white-space:pre;letter-spacing:0.387px;">.gitignore</div>
<svg style="position:absolute;left:164.40px;top:1733.82px;" width="45.4" height="45.4" viewBox="0 0 24 24"><path fill-rule="evenodd" fill="#ef5520" d="M2.700 3.200h18.200l-1.300 16.400-7.900 1.700-7.450-1.700zM6 6.260h11.600l-.15 1.940H8.200v2.200h8.950l-.55 7.450-4.900 1.050-4.800-1.050-.5-3.500h2.200l.2 1.800 2.900.65 3-.65.250-3.750H6.400z"/></svg>
<div style="position:absolute;left:227.1px;top:1726.92px;height:62px;line-height:62px;font-family:'Liberation Sans', sans-serif;font-size:38px;color:#e1e4e8;white-space:pre;letter-spacing:0.230px;">index.html</div>
<div style="position:absolute;left:22px;top:416.6px;width:896px;height:9px;background:linear-gradient(#14171a,rgba(20,23,26,0))"></div>
<div style="position:absolute;left:1109.2px;top:670.2px;width:1757.8px;height:50.5px;background:#2b3036;"></div>
<div style="position:absolute;left:1107.4px;top:363.6px;width:1.8px;height:102.19999999999999px;background:#2f363d;"></div>
<div style="position:absolute;left:1107.4px;top:670.2px;width:1.8px;height:204.4000000000001px;background:#444d56;"></div>
<div style="position:absolute;left:1107.4px;top:1027.9px;width:1.8px;height:511.0px;background:#2f363d;"></div>
<div style="position:absolute;left:1148.42px;top:1334.5px;width:1.8px;height:153.29999999999995px;background:#2f363d;"></div>
<div style="position:absolute;left:1107.7px;top:165.2px;height:44px;line-height:44px;font-family:'Liberation Sans', sans-serif;font-size:30px;color:#82878e;white-space:pre;letter-spacing:0.014px;">You, 2 days ago | 1 author (You)</div>
<div class="ln" style="top:211.60px;color:#444d56">1</div>
<div class="cl" style="top:211.60px"><span class="k">import</span> LibGenerateTestUserSig <span class="k">from</span> <span class="s">'./lib-generate-test-usersig-es.min.js'</span>;</div>
<div class="ln" style="top:262.70px;color:#444d56">2</div>
<div class="ln" style="top:313.80px;color:#444d56">3</div>
<div class="cl" style="top:313.80px"><span class="m">/<span class="a">*</span><span class="a">*</span></span></div>
<div class="ln" style="top:364.90px;color:#444d56">4</div>
<div class="cl" style="top:364.90px"><span class="m"> <span class="a">*</span> Refer to the READEME.md for the SDKAppID<span style="display:inline-block;letter-spacing:0;width:34px;height:1px;position:relative"><svg style="position:absolute;left:4px;top:-6px" width="12" height="12" viewBox="0 0 12 12"><path d="M2 1.500C4.500 3.500 7 6.500 9 9.500" stroke="#6a737d" stroke-width="2.600" fill="none" stroke-linecap="round"/></svg></span>SecretKey</span></div>
<div class="ln" style="top:416.00px;color:#444d56">5</div>
<div class="cl" style="top:416.00px"><span class="m"> <span class="a">*</span>/</span></div>
<div class="ln" style="top:467.10px;color:#444d56">6</div>
<div class="cl" style="top:467.10px"><span class="k">let</span> SDKAppID <span class="k">=</span> <span class="c">0</span>;</div>
<div class="ln" style="top:518.20px;color:#444d56">7</div>
<div class="cl" style="top:518.20px"><span class="k">let</span> SecretKey <span class="k">=</span> <span class="s">''</span>;</div>
<div class="ln" style="top:569.30px;color:#444d56">8</div>
<div class="ln" style="top:620.40px;color:#444d56">9</div>
<div class="cl" style="top:620.40px"><span class="m">/<span class="a">*</span><span class="a">*</span></span></div>
<div class="ln" style="top:671.50px;color:#e1e4e8">10</div>
<div class="cl" style="top:671.50px"><span class="m"> <span class="a">*</span> Expiration time for the signature, it is recommended not to set it too short.</span></div>
<div class="ln" style="top:722.60px;color:#444d56">11</div>
<div class="cl" style="top:722.60px"><span class="m"> <span class="a">*</span> Time unit: seconds</span></div>
<div class="ln" style="top:773.70px;color:#444d56">12</div>
<div class="cl" style="top:773.70px"><span class="m"> <span class="a">*</span> Default time: 7 x 24 x 60 x 60 = 604800 = 7 days</span></div>
<div class="ln" style="top:824.80px;color:#444d56">13</div>
<div class="cl" style="top:824.80px"><span class="m"> <span class="a">*</span>/</span></div>
<div class="ln" style="top:875.90px;color:#444d56">14</div>
<div class="cl" style="top:875.90px"><span class="k">const</span> <span class="c">EXPIRETIME</span> <span class="k">=</span> <span class="c">604800</span>;</div>
<div class="ln" style="top:927.00px;color:#444d56">15</div>
<div class="ln" style="top:978.10px;color:#444d56">16</div>
<div class="cl" style="top:978.10px"><span class="k">export</span> <span class="k">function</span> <span class="f">genTestUserSig</span><span class="b1">(</span><span class="p">params</span><span class="b1">)</span> <span class="b1">{</span></div>
<div class="ln" style="top:1029.20px;color:#444d56">17</div>
<div class="cl" style="top:1029.20px">  <span class="k">if</span> <span class="b2">(</span><span class="p">params</span>.SDKAppID<span class="b2">)</span> SDKAppID <span class="k">=</span> <span class="p">params</span>.SDKAppID;</div>
<div class="ln" style="top:1080.30px;color:#444d56">18</div>
<div class="cl" style="top:1080.30px">  <span class="k">if</span> <span class="b2">(</span><span class="p">params</span>.SecretKey<span class="b2">)</span> SecretKey <span class="k">=</span> <span class="p">params</span>.SecretKey;</div>
<div class="ln" style="top:1131.40px;color:#444d56">19</div>
<div class="cl" style="top:1131.40px">  <span class="k">const</span> <span class="c">generator</span> <span class="k">=</span> <span class="k">new</span> <span class="f">LibGenerateTestUserSig</span><span class="b2">(</span>SDKAppID, SecretKey, <span class="c">EXPIRETIME</span><span class="b2">)</span>;</div>
<div class="ln" style="top:1182.50px;color:#444d56">20</div>
<div class="cl" style="top:1182.50px">  <span class="k">const</span> <span class="c">userSig</span> <span class="k">=</span> <span class="c">generator</span>.<span class="f">genTestUserSig</span><span class="b2">(</span><span class="p">params</span>.userID<span class="b2">)</span>;</div>
<div class="ln" style="top:1233.60px;color:#444d56">21</div>
<div class="ln" style="top:1284.70px;color:#444d56">22</div>
<div class="cl" style="top:1284.70px">  <span class="k">return</span> <span class="b2">{</span></div>
<div class="ln" style="top:1335.80px;color:#444d56">23</div>
<div class="cl" style="top:1335.80px">    SDKAppID,</div>
<div class="ln" style="top:1386.90px;color:#444d56">24</div>
<div class="cl" style="top:1386.90px">    SecretKey,</div>
<div class="ln" style="top:1438.00px;color:#444d56">25</div>
<div class="cl" style="top:1438.00px">    userSig,</div>
<div class="ln" style="top:1489.10px;color:#444d56">26</div>
<div class="cl" style="top:1489.10px">  <span class="b2">}</span>;</div>
<div class="ln" style="top:1540.20px;color:#444d56">27</div>
<div class="cl" style="top:1540.20px"><span class="b1">}</span></div>
<div class="ln" style="top:1591.30px;color:#444d56">28</div>
<div class="ln" style="top:1642.40px;color:#444d56">29</div>
<div class="cl" style="top:1642.40px"><span class="k">export</span> <span class="k">default</span> <span class="f">genTestUserSig</span>;</div>
<div class="ln" style="top:1693.50px;color:#444d56">30</div>
<svg style="position:absolute;left:2255.26px;top:210.30px;overflow:hidden" width="144.07" height="56" viewBox="0 0 144.07 56"><path d="M-12.33 49.10L-3.82 42.90L4.70 49.10L13.21 42.90L21.73 49.10L30.25 42.90L38.76 49.10L47.28 42.90L55.79 49.10L64.31 42.90L72.82 49.10L81.34 42.90L89.85 49.10L98.37 42.90L106.88 49.10L115.40 42.90L123.91 49.10L132.43 42.90L140.94 49.10L149.45 42.90L157.97 49.10L166.49 42.90" fill="none" stroke="#2f9bff" stroke-width="2.500" stroke-linejoin="round"/></svg>
<svg style="position:absolute;left:1434.86px;top:363.60px;overflow:hidden" width="144.07" height="56" viewBox="0 0 144.07 56"><path d="M-12.33 49.10L-3.82 42.90L4.70 49.10L13.21 42.90L21.73 49.10L30.25 42.90L38.76 49.10L47.28 42.90L55.79 49.10L64.31 42.90L72.82 49.10L81.34 42.90L89.85 49.10L98.37 42.90L106.88 49.10L115.40 42.90L123.91 49.10L132.43 42.90L140.94 49.10L149.45 42.90L157.97 49.10L166.49 42.90" fill="none" stroke="#2f9bff" stroke-width="2.500" stroke-linejoin="round"/></svg>
<svg style="position:absolute;left:1229.76px;top:874.60px;overflow:hidden" width="205.60" height="56" viewBox="0 0 205.60 56"><path d="M-12.33 49.10L-3.82 42.90L4.70 49.10L13.21 42.90L21.73 49.10L30.25 42.90L38.76 49.10L47.28 42.90L55.79 49.10L64.31 42.90L72.82 49.10L81.34 42.90L89.85 49.10L98.37 42.90L106.88 49.10L115.40 42.90L123.91 49.10L132.43 42.90L140.94 49.10L149.45 42.90L157.97 49.10L166.49 42.90L175.00 49.10L183.51 42.90L192.03 49.10L200.55 42.90L209.06 49.10L217.57 42.90" fill="none" stroke="#2f9bff" stroke-width="2.500" stroke-linejoin="round"/></svg>
<svg style="position:absolute;left:2501.38px;top:1130.10px;overflow:hidden" width="205.60" height="56" viewBox="0 0 205.60 56"><path d="M-12.33 49.10L-3.82 42.90L4.70 49.10L13.21 42.90L21.73 49.10L30.25 42.90L38.76 49.10L47.28 42.90L55.79 49.10L64.31 42.90L72.82 49.10L81.34 42.90L89.85 49.10L98.37 42.90L106.88 49.10L115.40 42.90L123.91 49.10L132.43 42.90L140.94 49.10L149.45 42.90L157.97 49.10L166.49 42.90L175.00 49.10L183.51 42.90L192.03 49.10L200.55 42.90L209.06 49.10L217.57 42.90" fill="none" stroke="#2f9bff" stroke-width="2.500" stroke-linejoin="round"/></svg>
<div style="position:absolute;left:965px;top:105.1px;height:62px;line-height:62px;font-family:'Liberation Sans', sans-serif;font-size:38px;color:#959da5;white-space:pre;letter-spacing:-0.651px;">Web</div>
<svg style="position:absolute;left:1057.00px;top:120.25px" width="18" height="30.5" viewBox="0 0 18 30.5"><path d="M3 3L15 15.25L3 27.5" fill="none" stroke="#959da5" stroke-width="2.5"/></svg>
<div style="position:absolute;left:1087px;top:105.1px;height:62px;line-height:62px;font-family:'Liberation Sans', sans-serif;font-size:38px;color:#959da5;white-space:pre;letter-spacing:0.969px;">basic-react</div>
<svg style="position:absolute;left:1299.00px;top:120.25px" width="18" height="30.5" viewBox="0 0 18 30.5"><path d="M3 3L15 15.25L3 27.5" fill="none" stroke="#959da5" stroke-width="2.5"/></svg>
<div style="position:absolute;left:1329.5px;top:105.1px;height:62px;line-height:62px;font-family:'Liberation Sans', sans-serif;font-size:38px;color:#959da5;white-space:pre;letter-spacing:0.448px;">src</div>
<svg style="position:absolute;left:1397.40px;top:120.25px" width="18" height="30.5" viewBox="0 0 18 30.5"><path d="M3 3L15 15.25L3 27.5" fill="none" stroke="#959da5" stroke-width="2.5"/></svg>
<div style="position:absolute;left:1427.5px;top:105.1px;height:62px;line-height:62px;font-family:'Liberation Sans', sans-serif;font-size:38px;color:#959da5;white-space:pre;letter-spacing:0.566px;">debug</div>
<svg style="position:absolute;left:1551.40px;top:120.25px" width="18" height="30.5" viewBox="0 0 18 30.5"><path d="M3 3L15 15.25L3 27.5" fill="none" stroke="#959da5" stroke-width="2.5"/></svg>
<svg style="position:absolute;left:1582.20px;top:112.80px;opacity:.92" width="45.4" height="45.4" viewBox="0 0 24 24"><path d="M3 3h18v18H3V3m4.730 15.040c.4.850 1.190 1.550 2.540 1.550 1.500 0 2.530-.8 2.530-2.550v-5.780h-1.700V17c0 .860-.35 1.080-.9 1.080-.58 0-.82-.4-1.090-.870l-1.380.830m5.980-.18c.5.980 1.510 1.730 3.090 1.730 1.600 0 2.800-.830 2.800-2.360 0-1.410-.81-2.040-2.250-2.660l-.42-.18c-.73-.31-1.040-.52-1.040-1.020 0-.41.310-.73.810-.73.480 0 .8.210 1.090.73l1.310-.870c-.55-.96-1.330-1.330-2.400-1.330-1.510 0-2.480.960-2.480 2.230 0 1.380.810 2.030 2.030 2.550l.42.180c.78.340 1.240.55 1.240 1.130 0 .48-.45.830-1.150.830-.830 0-1.310-.43-1.670-1.030l-1.380.8z" fill="#ffca28"/></svg>
<div style="position:absolute;left:1644.5px;top:105.1px;height:62px;line-height:62px;font-family:'Liberation Sans', sans-serif;font-size:38px;color:#959da5;white-space:pre;letter-spacing:0.157px;">GenerateTestUserSig-es.js</div>
<svg style="position:absolute;left:2118.00px;top:120.25px" width="18" height="30.5" viewBox="0 0 18 30.5"><path d="M3 3L15 15.25L3 27.5" fill="none" stroke="#959da5" stroke-width="2.5"/></svg>
<div style="position:absolute;left:2151.5px;top:144.5px;width:4.6px;height:4.6px;border-radius:50%;background:#959da5"></div>
<div style="position:absolute;left:2162.1px;top:144.5px;width:4.6px;height:4.6px;border-radius:50%;background:#959da5"></div>
<div style="position:absolute;left:2172.7px;top:144.5px;width:4.6px;height:4.6px;border-radius:50%;background:#959da5"></div>
<svg style="position:absolute;left:903px;top:84px" width="1485" height="100" viewBox="0 0 1485 100"><defs><linearGradient id="g1" gradientUnits="userSpaceOnUse" x1="0" y1="0" x2="0" y2="100"><stop offset="0" stop-color="#ffffff"/><stop offset=".12" stop-color="#fcfdfe"/><stop offset=".5" stop-color="#dfe8f6"/><stop offset=".82" stop-color="#a9bfe4"/><stop offset="1" stop-color="#c2d1ea"/></linearGradient></defs><rect x="4.0" y="4.0" width="1477" height="92" rx="21.0" fill="rgba(58,118,225,0.14)" stroke="url(#g1)" stroke-width="8"/></svg>
<svg style="position:absolute;left:1077px;top:452px" width="451" height="128" viewBox="0 0 451 128"><defs><linearGradient id="g2" gradientUnits="userSpaceOnUse" x1="0" y1="0" x2="0" y2="128"><stop offset="0" stop-color="#ffffff"/><stop offset=".12" stop-color="#fcfdfe"/><stop offset=".5" stop-color="#dfe8f6"/><stop offset=".82" stop-color="#a9bfe4"/><stop offset="1" stop-color="#c2d1ea"/></linearGradient></defs><rect x="4.0" y="4.0" width="443" height="120" rx="21.0" fill="rgba(58,118,225,0.14)" stroke="url(#g2)" stroke-width="8"/></svg>
<div style="position:absolute;left:1579px;top:449px;width:1203px;height:126px;border-radius:26px;background:#fff"></div>
<div style="position:absolute;left:1585px;top:455px;width:1191px;height:114px;border-radius:20px;background:linear-gradient(100deg,#f6f8fc 0%,#e9eef8 18%,#cfdaee 42%,#b4c6e6 62%,#a9bde2 76%,#b9c9e8 90%,#c8d5ed 100%)"></div>
<svg style="position:absolute;left:2132px;top:515px" width="18" height="18" viewBox="0 0 18 18"><path d="M2.500 2.500C7 5.500 11 9.500 14.500 14" stroke="#1558d6" stroke-width="4.600" fill="none" stroke-linecap="round"/></svg>
<div style="position:absolute;left:1606px;top:449.5px;height:126px;line-height:126px;font-family:'Liberation Sans', sans-serif;font-size:46px;color:#1558d6;white-space:pre;font-weight:bold;letter-spacing:-0.391px;">Fill with your SDKAppID</div>
<div style="position:absolute;left:2187.5px;top:449.5px;height:126px;line-height:126px;font-family:'Liberation Sans', sans-serif;font-size:46px;color:#1558d6;white-space:pre;font-weight:bold;letter-spacing:-0.731px;">SecretKey / SDKSecretKey</div>
</body></html>
